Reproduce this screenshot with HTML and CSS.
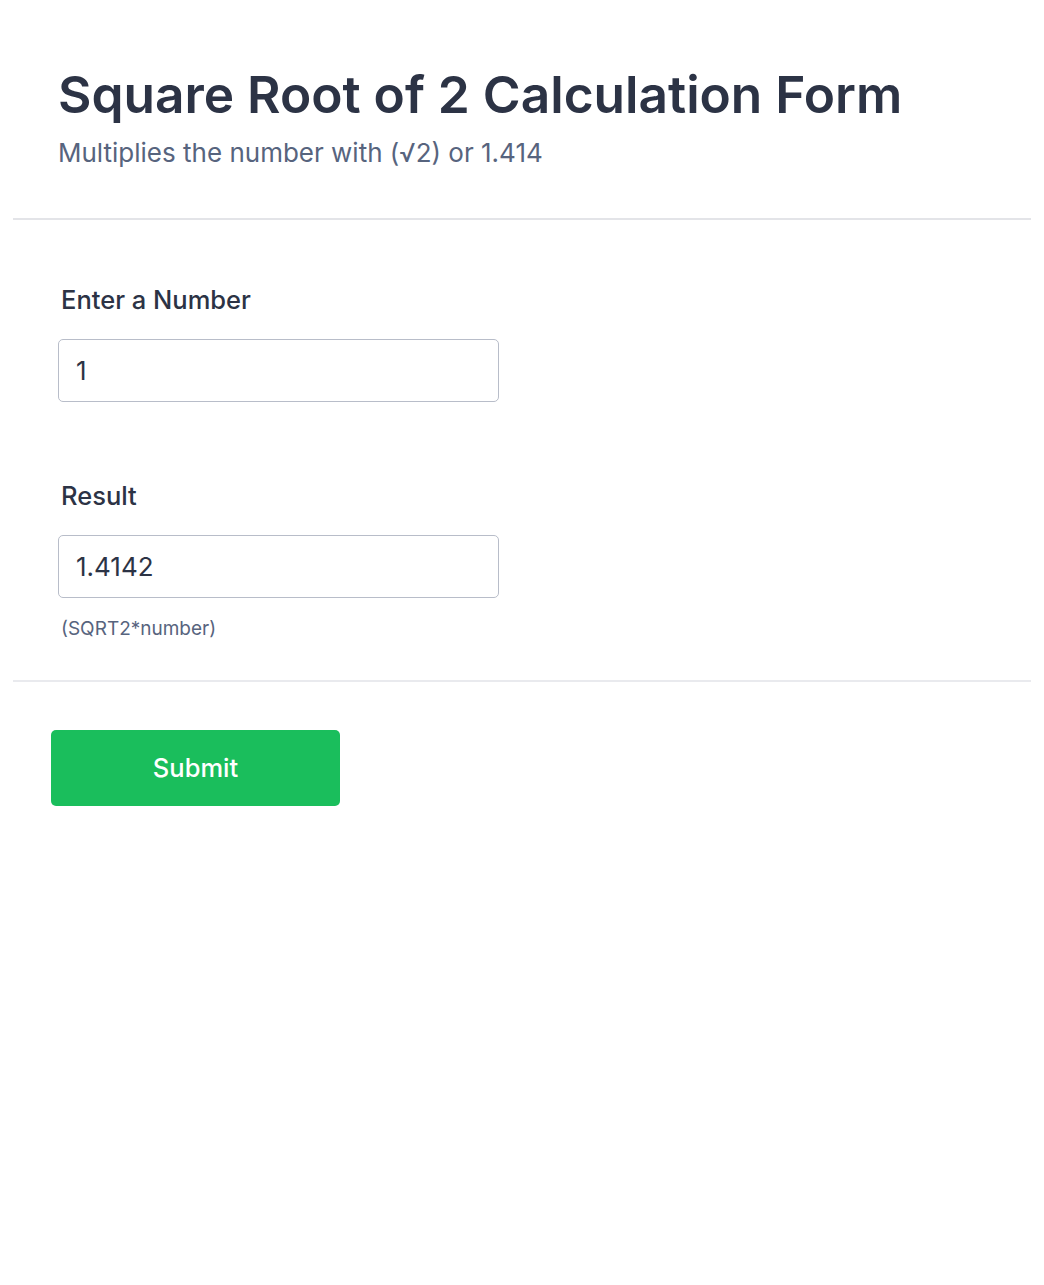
FILE: index.html
```html
<!DOCTYPE html>
<html>
<head>
<meta charset="utf-8">
<link rel="stylesheet" href="styles.css">
</head>
<body>
<div class="page">
  <header class="form-header">
    <h1 class="title">Square Root of 2 Calculation Form</h1>
    <p class="subtitle">Multiplies the number with (√2) or 1.414</p>
  </header>
  <section class="fields">
    <div class="field">
      <label class="label">Enter a Number</label>
      <div class="input">1</div>
    </div>
    <div class="field">
      <label class="label">Result</label>
      <div class="input">1.4142</div>
      <div class="hint">(SQRT2*number)</div>
    </div>
  </section>
  <div class="actions">
    <button class="submit">Submit</button>
  </div>
</div>
</body>
</html>
```
FILE: styles.css
```css
* { box-sizing: border-box; }
body {
  margin: 0;
  background: #fff;
  font-family: Inter, "Noto Sans", sans-serif;
  color: #2c3345;
}
.page {
  padding: 0 13px;
}
.form-header {
  padding: 64px 45px 49px;
  border-bottom: 2px solid #e3e4e8;
}
.title {
  margin: 0;
  font-size: 51.4px;
  font-weight: 600;
  line-height: 1.2;
  color: #2c3345;
}
.subtitle {
  margin: 10px 0 0;
  font-size: 26px;
  line-height: 1.3;
  color: #57647e;
}
.fields {
  padding: 65px 45px 40px;
  border-bottom: 2px solid #e9eaee;
  display: flex;
  flex-direction: column;
  gap: 79px;
}
.field {
  display: flex;
  flex-direction: column;
}
.label {
  font-size: 25.5px;
  font-weight: 450;
  padding-left: 3px;
  line-height: 1.2;
  margin-bottom: 23px;
}
.input {
  width: 441px;
  height: 63px;
  border: 1.5px solid #b8bdc9;
  border-radius: 5px;
  padding: 0 17px;
  display: flex;
  align-items: center;
  font-size: 26px;
  color: #2c3345;
}
.hint {
  margin-top: 19px;
  padding-left: 3px;
  font-size: 19px;
  line-height: 23px;
  color: #57647e;
}
.actions {
  padding: 48px 38px;
}
.submit {
  width: 289px;
  height: 76px;
  border: none;
  border-radius: 5px;
  background: #1abe5c;
  color: #fff;
  font-family: Inter, "Noto Sans", sans-serif;
  font-size: 25.5px;
  font-weight: 450;
}
```
